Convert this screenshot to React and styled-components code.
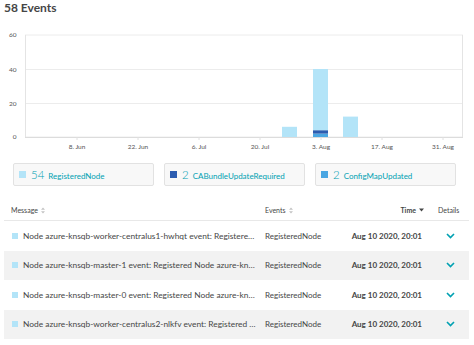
import React from "react";
import styled, { createGlobalStyle } from "styled-components";

const GlobalStyle = createGlobalStyle`
  body {
    margin: 0;
    background: #fff;
    font-family: Lato, "Open Sans", sans-serif;
    color: #454646;
  }
`;

const Page = styled.div`
  width: 474px;
`;

const Title = styled.div`
  height: 22px;
  padding-left: 4px;
  font-size: 12px;
  line-height: 16px;
  font-weight: 700;
  color: #454646;
`;

const Chart = styled.svg`
  display: block;
  font-family: Lato, sans-serif;
`;

const Legend = styled.div`
  display: flex;
  gap: 10px;
  padding: 9px 0 0 13px;
`;

const Card = styled.div`
  width: 141px;
  height: 23px;
  box-sizing: border-box;
  display: flex;
  align-items: center;
  gap: 5px;
  padding-left: 5px;
  background: #f8f8f8;
  border: 1px solid #e2e2e2;
  border-radius: 2px;
`;

const Swatch = styled.span`
  flex: none;
  width: ${(p) => p.size || 6}px;
  height: ${(p) => p.size || 6}px;
  background: ${(p) => p.color};
`;

const Count = styled.span`
  font-size: 11.5px;
  font-weight: 300;
  color: #00a1b2;
`;

const CardLabel = styled.span`
  font-size: 8px;
  color: #00a1b2;
  margin-left: -1px;
  margin-top: 2px;
`;

const Table = styled.div`
  margin: 14px 5px 0 4px;
`;

const Row = styled.div`
  display: grid;
  grid-template-columns: 258px 86px 80px 1fr;
  align-items: center;
  height: ${(p) => (p.head ? "20px" : "29.5px")};
  background: ${(p) => (p.shade ? "#f2f2f2" : "transparent")};
  border-bottom: ${(p) => (p.head ? "1px solid #e8e8e8" : "none")};
  font-size: ${(p) => (p.head ? "7px" : "8px")};
`;

const Cell = styled.div`
  display: flex;
  align-items: center;
  gap: ${(p) => p.gap || 3}px;
  min-width: 0;
  overflow: hidden;
  padding: ${(p) => p.pad || "0"};
  justify-content: ${(p) => p.justify || "flex-start"};
  font-weight: ${(p) => (p.bold ? 700 : 400)};
  white-space: nowrap;
`;

const Ellipsis = styled.span`
  min-width: 0;
  font-size: 8.4px;
  overflow: hidden;
  text-overflow: ellipsis;
  white-space: nowrap;
`;

const SortIcon = () => (
  <svg width="4" height="7" viewBox="0 0 4 7">
    <path d="M0 2.8 L2 0.6 L4 2.8 Z M0 4.2 L2 6.4 L4 4.2 Z" fill="#c4c4c4" />
  </svg>
);

const CaretDown = () => (
  <svg width="5" height="4" viewBox="0 0 5 4">
    <path d="M0 0.5 L5 0.5 L2.5 3.5 Z" fill="#454646" />
  </svg>
);

const Chevron = () => (
  <svg width="9" height="6" viewBox="0 0 9 6">
    <path d="M1 1 L4.5 4.6 L8 1" fill="none" stroke="#00a1b2" strokeWidth="1.6" />
  </svg>
);

const LIGHT = "#b3e4f8";
const DARK = "#2c5cb0";
const MID = "#4aa6e2";

const yTicks = [
  { v: 60, y: 35 },
  { v: 40, y: 69.5 },
  { v: 20, y: 103.5 },
  { v: 0, y: 137 },
];

const xTicks = [
  ["8. Jun", 77],
  ["22. Jun", 138],
  ["6. Jul", 199],
  ["20. Jul", 260],
  ["3. Aug", 321],
  ["17. Aug", 382],
  ["31. Aug", 443],
];

const unit = 102 / 60;
const bars = [
  { x: 282, parts: [[LIGHT, 6]] },
  { x: 313, parts: [[MID, 2], [DARK, 2], [LIGHT, 36]] },
  { x: 343, parts: [[LIGHT, 12]] },
];

const legend = [
  { n: 54, label: "RegisteredNode", color: LIGHT },
  { n: 2, label: "CABundleUpdateRequired", color: DARK },
  { n: 2, label: "ConfigMapUpdated", color: MID },
];

const events = [
  "Node azure-knsqb-worker-centralus1-hwhqt event: Registered Node azure-knsqb-worker-centralus1-hwhqt in Controller",
  "Node azure-knsqb-master-1 event: Registered Node azure-knsqb-master-1 in Controller",
  "Node azure-knsqb-master-0 event: Registered Node azure-knsqb-master-0 in Controller",
  "Node azure-knsqb-worker-centralus2-nlkfv event: Registered Node azure-knsqb-worker-centralus2-nlkfv in Controller",
];

export default function App() {
  return (
    <Page>
      <GlobalStyle />
      <Title>58 Events</Title>
      <Chart width="474" height="132" viewBox="0 22 474 132">
        {yTicks.map((t) => (
          <g key={t.v}>
            <line x1="25" x2="463" y1={t.y} y2={t.y} stroke="#ececec" strokeWidth="1" />
            <text x="16.5" y={t.y + 2.3} fontSize="6.5" fill="#555" textAnchor="end">
              {t.v}
            </text>
          </g>
        ))}
        <line x1="25.5" x2="25.5" y1="35" y2="137" stroke="#e4e4e4" />
        <line x1="462.5" x2="462.5" y1="35" y2="137" stroke="#e4e4e4" />
        <line x1="25" x2="463" y1="137.5" y2="137.5" stroke="#dcdcdc" />
        {xTicks.map(([label, x]) => (
          <g key={label}>
            <line x1={x} x2={x} y1="137" y2="140" stroke="#e0e0e0" />
            <text x={x} y="148.5" fontSize="6.5" fill="#555" textAnchor="middle">
              {label}
            </text>
          </g>
        ))}
        {bars.map((b) => {
          let base = 137;
          return b.parts.map(([color, v], i) => {
            const h = v * unit;
            base -= h;
            return <rect key={b.x + "-" + i} x={b.x} y={base} width="15" height={h} fill={color} />;
          });
        })}
      </Chart>
      <Legend>
        {legend.map((l) => (
          <Card key={l.label}>
            <Swatch color={l.color} size={7} />
            <Count>{l.n}</Count>
            <CardLabel>{l.label}</CardLabel>
          </Card>
        ))}
      </Legend>
      <Table>
        <Row head>
          <Cell pad="0 0 0 7px">
            Message <SortIcon />
          </Cell>
          <Cell pad="0 0 0 3px">
            Events <SortIcon />
          </Cell>
          <Cell pad="0 4px 0 0" justify="flex-end" bold>
            Time <CaretDown />
          </Cell>
          <Cell pad="0 0 0 10px">Details</Cell>
        </Row>
        {events.map((msg, i) => (
          <Row key={i} shade={i % 2 === 1}>
            <Cell pad="0 4px 0 8px" gap={5}>
              <Swatch color={LIGHT} />
              <Ellipsis>{msg}</Ellipsis>
            </Cell>
            <Cell pad="0 0 0 3px">RegisteredNode</Cell>
            <Cell pad="0 6px 0 0" justify="flex-end" bold>
              Aug 10 2020, 20:01
            </Cell>
            <Cell justify="center" pad="0 0 0 4px">
              <Chevron />
            </Cell>
          </Row>
        ))}
      </Table>
    </Page>
  );
}
